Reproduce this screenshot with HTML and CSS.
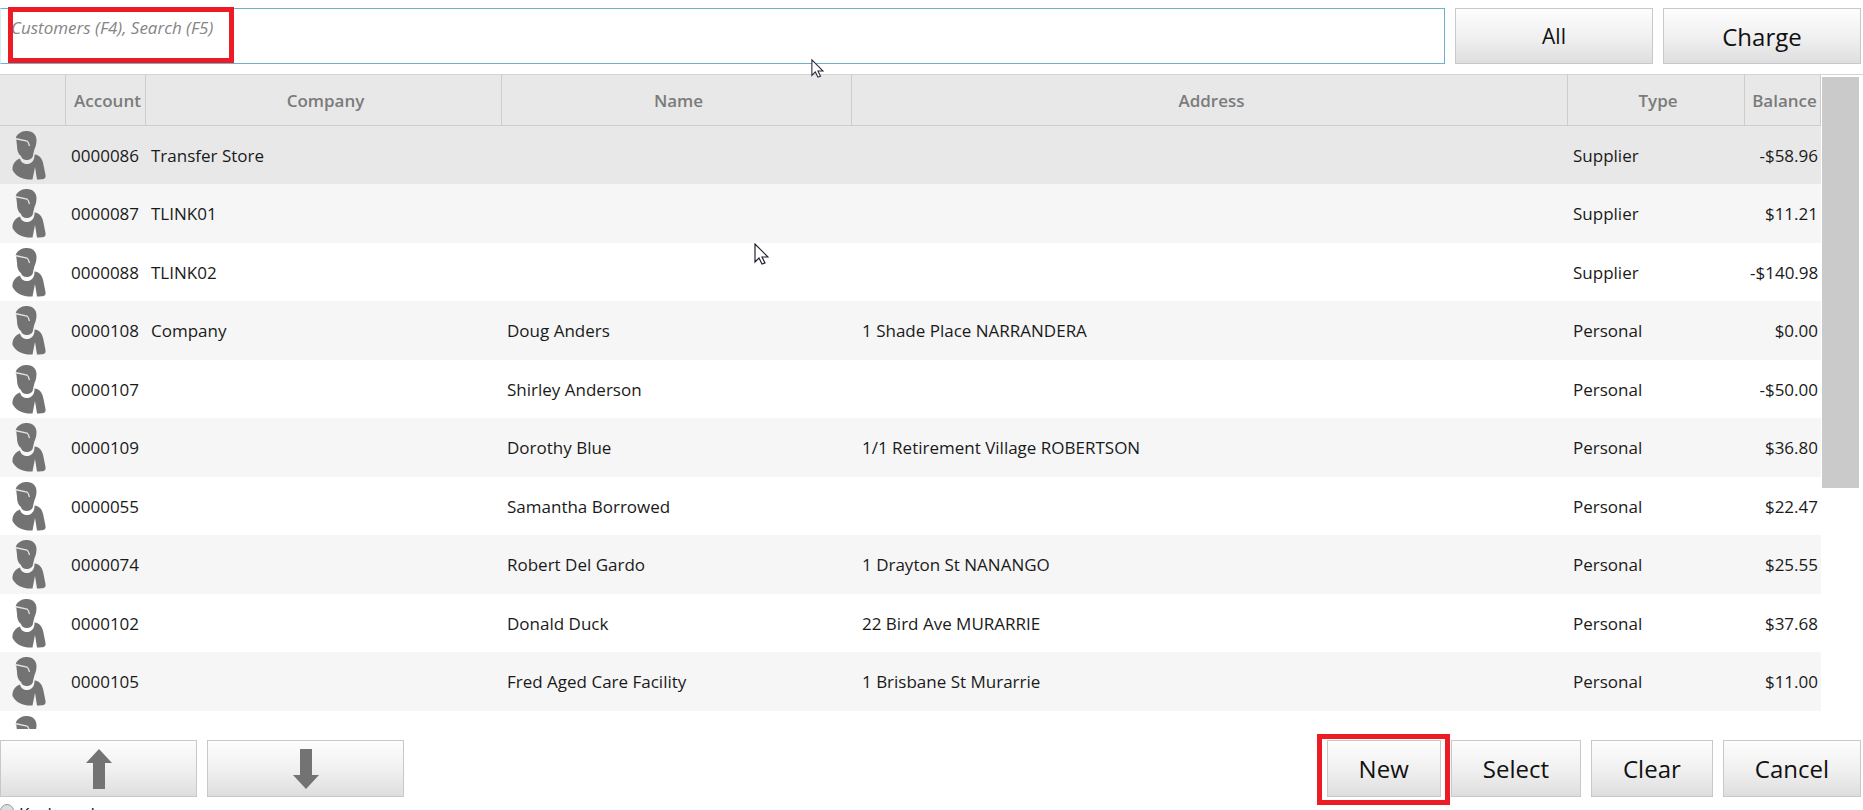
FILE: index.html
```html
<!DOCTYPE html>
<html lang="en">
<head>
<meta charset="utf-8">
<title>Customers</title>
<link rel="stylesheet" href="styles.css">
</head>
<body>
<svg class="defs" aria-hidden="true">
  <symbol id="person" viewBox="0 0 34 49">
    <path d="M4 6C7 1 11 0 15 0c6 0 9.500 4 9.500 9C24.500 13 23.500 16 22.500 18L21 24C21 30 10 31 9 25C6 23 5 19 5 15z" fill="#737373"/>
    <path d="M8 27.500C10 36 23 35 22.500 23.500C28 24 30.500 28 31.500 34L33.500 44C34 48 32 48.500 25 48.500L23 36L20.500 48.500C12 49 4 46 0.500 39C0 34 3 29 8 27.500z" fill="#737373"/>
    <path d="M3 7.500l12 2.500c1.500 1 2 3 2.500 5" fill="none" stroke="#e4e4e4" stroke-width="1.300"/>
  </symbol>
  <symbol id="pointer" viewBox="0 0 15 22">
    <path d="M1 1v18l4-4 3 6 3-1-3-6h6z" fill="#fff" stroke="#223" stroke-width="1.2"/>
  </symbol>
</svg>
<main class="app">
  <div class="toolbar">
    <div class="search marked">
      <input class="search-box" type="text" aria-label="Search customers" placeholder="Customers (F4), Search (F5)">
    </div>
    <button class="btn top small" type="button">All</button>
    <button class="btn top" type="button">Charge</button>
  </div>

  <div class="list">
    <div class="viewport">
    <table class="grid">
      <colgroup><col class="c-icon"><col class="c-account"><col class="c-company"><col class="c-name"><col><col class="c-type"><col class="c-balance"></colgroup>
      <thead>
        <tr><th></th><th>Account</th><th>Company</th><th>Name</th><th>Address</th><th>Type</th><th>Balance</th></tr>
      </thead>
      <tbody>
        <tr class="selected"><td><svg class="person"><use href="#person"/></svg></td><td>0000086</td><td>Transfer Store</td><td></td><td></td><td>Supplier</td><td>-$58.96</td></tr>
        <tr><td><svg class="person"><use href="#person"/></svg></td><td>0000087</td><td>TLINK01</td><td></td><td></td><td>Supplier</td><td>$11.21</td></tr>
        <tr><td><svg class="person"><use href="#person"/></svg></td><td>0000088</td><td>TLINK02</td><td></td><td></td><td>Supplier</td><td>-$140.98</td></tr>
        <tr><td><svg class="person"><use href="#person"/></svg></td><td>0000108</td><td>Company</td><td>Doug Anders</td><td>1 Shade Place NARRANDERA</td><td>Personal</td><td>$0.00</td></tr>
        <tr><td><svg class="person"><use href="#person"/></svg></td><td>0000107</td><td></td><td>Shirley Anderson</td><td></td><td>Personal</td><td>-$50.00</td></tr>
        <tr><td><svg class="person"><use href="#person"/></svg></td><td>0000109</td><td></td><td>Dorothy Blue</td><td>1/1 Retirement Village ROBERTSON</td><td>Personal</td><td>$36.80</td></tr>
        <tr><td><svg class="person"><use href="#person"/></svg></td><td>0000055</td><td></td><td>Samantha Borrowed</td><td></td><td>Personal</td><td>$22.47</td></tr>
        <tr><td><svg class="person"><use href="#person"/></svg></td><td>0000074</td><td></td><td>Robert Del Gardo</td><td>1 Drayton St NANANGO</td><td>Personal</td><td>$25.55</td></tr>
        <tr><td><svg class="person"><use href="#person"/></svg></td><td>0000102</td><td></td><td>Donald Duck</td><td>22 Bird Ave MURARRIE</td><td>Personal</td><td>$37.68</td></tr>
        <tr><td><svg class="person"><use href="#person"/></svg></td><td>0000105</td><td></td><td>Fred Aged Care Facility</td><td>1 Brisbane St Murarrie</td><td>Personal</td><td>$11.00</td></tr>
        <tr><td><svg class="person"><use href="#person"/></svg></td><td></td><td></td><td></td><td></td><td></td><td></td></tr>
      </tbody>
    </table>
    </div>
    <div class="scrollbar"><div class="thumb"></div></div>
  </div>

  <div class="actions">
    <button class="btn arrow" type="button" aria-label="Up"><svg width="26" height="40" viewBox="0 0 26 40"><path d="M13 0l13 14h-7v26H7V14H0z" fill="#737373"/></svg></button>
    <button class="btn arrow" type="button" aria-label="Down"><svg width="26" height="40" viewBox="0 0 26 40"><path d="M13 40l13-14h-7V0H7v26H0z" fill="#737373"/></svg></button>
    <span class="spacer"></span>
    <div class="marked"><button class="btn" type="button">New</button></div>
    <button class="btn" type="button">Select</button>
    <button class="btn" type="button">Clear</button>
    <button class="btn" type="button">Cancel</button>
  </div>

  <div class="footer">
    <label class="keyboard"><input type="radio" name="keyboard">Keyboard</label>
  </div>

  <svg class="pointer first" aria-hidden="true"><use href="#pointer"/></svg>
  <svg class="pointer second" aria-hidden="true"><use href="#pointer"/></svg>
</main>
</body>
</html>
```

FILE: styles.css
```css
*, *::after { box-sizing: border-box; }

body {
  margin: 0;
  background: #fff;
  color: #1a1a1a;
  font-family: "Open Sans", "Noto Sans", sans-serif;
  font-size: 17px;
}

.defs { position: absolute; width: 0; height: 0; }

.app {
  position: relative;
  display: flex;
  flex-direction: column;
  height: 100vh;
  padding-top: 8px;
  overflow: hidden;
}

.toolbar { display: flex; gap: 10px; padding-right: 2px; }

.search { flex: 1; display: flex; }

.search-box {
  flex: 1;
  height: 56px;
  padding: 0 10px 18px;
  border: 1px solid #6fb0cd;
  border-left-color: #d4f2f7;
  border-radius: 0;
  outline: 0;
  font: inherit;
  background: #fff;
}
.search-box::placeholder { color: #858585; font-style: italic; opacity: 1; }

.marked { position: relative; }
.marked::after {
  content: "";
  position: absolute;
  inset: -6px -9px -8px -10px;
  border: 5px solid #ed1c24;
  pointer-events: none;
}
.search.marked::after { inset: -1px auto 1px 8px; width: 226px; }

.btn {
  height: 57px;
  padding: 0 31px;
  border: 1px solid #c8c8c8;
  border-radius: 0;
  background: linear-gradient(#fdfdfd, #f1f1f1 50%, #dedede);
  color: #111;
  font: inherit;
  font-size: 24px;
}
.btn.top { width: 198px; padding: 0; height: 56px; }
.btn.small { font-size: 21px; }
.btn.arrow { width: 197px; padding: 0; }
.btn svg { display: block; margin: 0 auto; }

.list {
  flex: 1;
  min-height: 0;
  display: flex;
  gap: 1px;
  margin: 10px 0 11px;
  border-top: 1px solid #d4d4d4;
}

.viewport { flex: 1; overflow: hidden; }

.grid {
  width: 100%;
  table-layout: fixed;
  border-collapse: separate;
  border-spacing: 0;
}
.c-icon { width: 66px; }
.c-account { width: 80px; }
.c-company { width: 356px; }
.c-name { width: 350px; }
.c-type { width: 177px; }
.c-balance { width: 76px; }

.grid th {
  height: 51px;
  padding: 1px 0 0 4px;
  background: #e8e8e8;
  border-right: 1px solid #cdcdcd;
  border-bottom: 1px solid #cdcdcd;
  color: #7b7b7b;
  font-weight: 600;
  text-align: center;
}
.grid td { height: 58px; padding: 0 4px 0 5px; white-space: nowrap; }
.grid tr:nth-child(even) td { height: 59px; background: #f6f6f6; }
.grid tr.selected td { background: #e8e8e8; }
.grid td:first-child { padding-left: 12px; }
.grid td:nth-child(5) { padding-left: 10px; }
.grid td:last-child { text-align: right; padding-right: 3px; }

.person { display: block; width: 34px; height: 49px; }

.scrollbar { width: 41px; padding: 2px 4px 0 0; }
.thumb { height: 63%; background: #cacaca; }

.actions { display: flex; gap: 10px; padding-right: 2px; }
.spacer { flex: 1; }

.footer { height: 13px; padding-top: 7px; overflow: hidden; }
.keyboard { display: flex; align-items: flex-start; gap: 5px; line-height: 20px; }
.keyboard input {
  appearance: none;
  width: 14px;
  height: 14px;
  margin: 0;
  border: 1px solid #999;
  border-radius: 50%;
  background: #ddd;
}

.pointer { position: absolute; pointer-events: none; }
.pointer.first { left: 811px; top: 59px; width: 13px; height: 19px; }
.pointer.second { left: 754px; top: 243px; width: 15px; height: 22px; }
```
